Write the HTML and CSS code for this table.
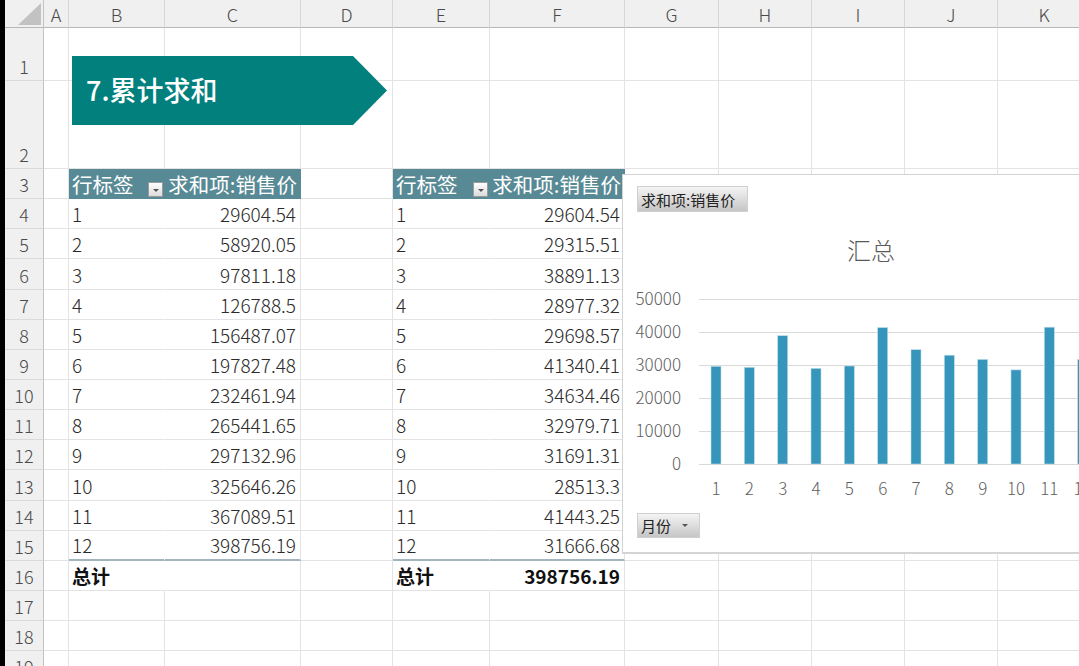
FILE: index.html
```html
<!DOCTYPE html>
<html lang="zh">
<head>
<meta charset="utf-8">
<title>累计求和</title>
<link rel="stylesheet" href="styles.css">
</head>
<body>
<div class="sheet">
  <div class="strip"></div>
  <div class="grid">
    <div class="ch corner"><span class="tri"></span></div><div class="ch">A</div><div class="ch">B</div><div class="ch">C</div><div class="ch">D</div><div class="ch">E</div><div class="ch">F</div><div class="ch">G</div><div class="ch">H</div><div class="ch">I</div><div class="ch">J</div><div class="ch">K</div>

    <div class="rh">1</div><div></div><div></div><div></div><div></div><div></div><div></div><div></div><div></div><div></div><div></div><div></div>
    <div class="rh">2</div><div></div><div></div><div></div><div></div><div></div><div></div><div></div><div></div><div></div><div></div><div></div>

    <div class="rh">3</div><div></div><div class="th thl">行标签<span class="dd"></span></div><div class="th thr">求和项:销售价</div><div></div><div class="th thl">行标签<span class="dd"></span></div><div class="th thr">求和项:销售价</div><div></div><div></div><div></div><div></div><div></div>

    <div class="rh">4</div><div></div><div class="pl">1</div><div class="pr">29604.54</div><div></div><div class="pl">1</div><div class="pr">29604.54</div><div></div><div></div><div></div><div></div><div></div>
    <div class="rh">5</div><div></div><div class="pl">2</div><div class="pr">58920.05</div><div></div><div class="pl">2</div><div class="pr">29315.51</div><div></div><div></div><div></div><div></div><div></div>
    <div class="rh">6</div><div></div><div class="pl">3</div><div class="pr">97811.18</div><div></div><div class="pl">3</div><div class="pr">38891.13</div><div></div><div></div><div></div><div></div><div></div>
    <div class="rh">7</div><div></div><div class="pl">4</div><div class="pr">126788.5</div><div></div><div class="pl">4</div><div class="pr">28977.32</div><div></div><div></div><div></div><div></div><div></div>
    <div class="rh">8</div><div></div><div class="pl">5</div><div class="pr">156487.07</div><div></div><div class="pl">5</div><div class="pr">29698.57</div><div></div><div></div><div></div><div></div><div></div>
    <div class="rh">9</div><div></div><div class="pl">6</div><div class="pr">197827.48</div><div></div><div class="pl">6</div><div class="pr">41340.41</div><div></div><div></div><div></div><div></div><div></div>
    <div class="rh">10</div><div></div><div class="pl">7</div><div class="pr">232461.94</div><div></div><div class="pl">7</div><div class="pr">34634.46</div><div></div><div></div><div></div><div></div><div></div>
    <div class="rh">11</div><div></div><div class="pl">8</div><div class="pr">265441.65</div><div></div><div class="pl">8</div><div class="pr">32979.71</div><div></div><div></div><div></div><div></div><div></div>
    <div class="rh">12</div><div></div><div class="pl">9</div><div class="pr">297132.96</div><div></div><div class="pl">9</div><div class="pr">31691.31</div><div></div><div></div><div></div><div></div><div></div>
    <div class="rh">13</div><div></div><div class="pl">10</div><div class="pr">325646.26</div><div></div><div class="pl">10</div><div class="pr">28513.3</div><div></div><div></div><div></div><div></div><div></div>
    <div class="rh">14</div><div></div><div class="pl">11</div><div class="pr">367089.51</div><div></div><div class="pl">11</div><div class="pr">41443.25</div><div></div><div></div><div></div><div></div><div></div>
    <div class="rh">15</div><div></div><div class="pl last">12</div><div class="pr last">398756.19</div><div></div><div class="pl last">12</div><div class="pr last">31666.68</div><div></div><div></div><div></div><div></div><div></div>

    <div class="rh">16</div><div></div><div class="pl tot">总计</div><div class="pr tot"></div><div></div><div class="pl tot">总计</div><div class="pr tot">398756.19</div><div></div><div></div><div></div><div></div><div></div>

    <div class="rh">17</div><div></div><div></div><div></div><div></div><div></div><div></div><div></div><div></div><div></div><div></div><div></div>
    <div class="rh">18</div><div></div><div></div><div></div><div></div><div></div><div></div><div></div><div></div><div></div><div></div><div></div>
    <div class="rh">19</div><div></div><div></div><div></div><div></div><div></div><div></div><div></div><div></div><div></div><div></div><div></div>
  </div>

  <div class="banner">7.累计求和</div>

  <div class="chart">
    <div class="cbtn">求和项:销售价</div>
    <div class="ctitle">汇总</div>
    <svg class="plot" width="496" height="236" viewBox="0 0 496 236">
      <g stroke="#d9d9d9" stroke-width="1">
        <line x1="76" y1="33.5" x2="496" y2="33.5"/>
        <line x1="76" y1="66.5" x2="496" y2="66.5"/>
        <line x1="76" y1="99.5" x2="496" y2="99.5"/>
        <line x1="76" y1="132.5" x2="496" y2="132.5"/>
        <line x1="76" y1="165.5" x2="496" y2="165.5"/>
        <line x1="76" y1="198.5" x2="496" y2="198.5"/>
      </g>
      <g class="ylab" text-anchor="end">
        <text x="58" y="39">50000</text>
        <text x="58" y="72">40000</text>
        <text x="58" y="105">30000</text>
        <text x="58" y="138">20000</text>
        <text x="58" y="171">10000</text>
        <text x="58" y="204">0</text>
      </g>
      <g fill="#3595bb" stroke="#bcdce8" stroke-width="0.6">
        <rect x="88" y="100.3" width="10" height="97.7"/>
        <rect x="121.3" y="101.3" width="10" height="96.7"/>
        <rect x="154.7" y="69.7" width="10" height="128.3"/>
        <rect x="188" y="102.4" width="10" height="95.6"/>
        <rect x="221.3" y="100" width="10" height="98"/>
        <rect x="254.7" y="61.6" width="10" height="136.4"/>
        <rect x="288" y="83.7" width="10" height="114.3"/>
        <rect x="321.3" y="89.2" width="10" height="108.8"/>
        <rect x="354.7" y="93.4" width="10" height="104.6"/>
        <rect x="388" y="103.9" width="10" height="94.1"/>
        <rect x="421.3" y="61.2" width="10" height="136.8"/>
        <rect x="454.7" y="93.5" width="10" height="104.5"/>
      </g>
      <g class="xlab" text-anchor="middle">
        <text x="93" y="229">1</text>
        <text x="126.3" y="229">2</text>
        <text x="159.7" y="229">3</text>
        <text x="193" y="229">4</text>
        <text x="226.3" y="229">5</text>
        <text x="259.7" y="229">6</text>
        <text x="293" y="229">7</text>
        <text x="326.3" y="229">8</text>
        <text x="359.7" y="229">9</text>
        <text x="393" y="229">10</text>
        <text x="426.3" y="229">11</text>
        <text x="459.7" y="229">12</text>
      </g>
    </svg>
    <div class="cbtn fbtn">月份<span class="arr"></span></div>
  </div>
</div>
</body>
</html>
```

FILE: styles.css
```css
* { box-sizing: border-box; margin: 0; padding: 0; }
html, body { width: 1079px; height: 666px; overflow: hidden; background: #fff; }
body { font-family: "Noto Sans CJK SC", "Noto Sans", sans-serif; color: #2b2b2b; }

.sheet { position: relative; display: flex; height: 666px; }
.strip { width: 5px; flex: none; background: #000; }

.grid {
  flex: none;
  display: grid;
  grid-template-columns: 39px 25px 96px 136px 92px 97px 135px 94px 93px 93px 93px 93px;
  grid-template-rows: 28px 53px 88px;
  grid-auto-rows: 30.15px;
}
.grid > div {
  border-right: 1px solid #e3e3e3;
  border-bottom: 1px solid #e3e3e3;
  display: flex;
  align-items: flex-end;
  padding: 0 3px 2px;
  font-size: 19px;
  font-weight: 300;
  line-height: 24px;
  white-space: nowrap;
  overflow: hidden;
  background: #fff;
}

/* column headers */
.grid > .ch {
  background: #f0f0f0;
  border-right-color: #d7d7d7;
  border-bottom-color: #b7b7b7;
  justify-content: center;
  align-items: center;
  padding: 0;
  font-size: 18px;
  color: #4a4a4a;
}
.grid > .corner { position: relative; border-right-color: #c3c3c3; }
.tri {
  position: absolute;
  right: 2px;
  bottom: 2px;
  width: 23px;
  height: 22px;
  background: #c2c2c2;
  clip-path: polygon(100% 0, 100% 100%, 0 100%);
}

/* row headers */
.grid > .rh {
  background: #f0f0f0;
  border-right-color: #c3c3c3;
  border-bottom-color: #dadada;
  justify-content: center;
  padding: 0 0 2px;
  font-size: 18px;
  color: #4a4a4a;
}

/* pivot header */
.grid > .th {
  background: #588a95;
  color: #fff;
  border-bottom-color: #588a95;
  border-right-color: #588a95;
  font-size: 20.5px;
  font-weight: 400;
}
.grid > .thl { padding-right: 1px; }
.grid > .thr { justify-content: flex-end; padding-right: 3px; }
.dd {
  margin-left: auto;
  margin-bottom: -1px;
  width: 15px;
  height: 15px;
  border: 1px solid #9a9a9a;
  background: linear-gradient(#ffffff, #dcdcdc);
  display: flex;
  align-items: center;
  justify-content: center;
}
.dd::after {
  content: "";
  border-left: 3px solid transparent;
  border-right: 3px solid transparent;
  border-top: 3px solid #555;
  margin-top: 2px;
}

/* pivot body */
.grid > .pl { border-right-color: #fff; }
.grid > .pr { justify-content: flex-end; padding-right: 4px; }
.grid > .last { border-bottom: 2px solid #a2b5bf; }
.grid > .tot { font-weight: 700; color: #111; }

/* floating shapes */
.banner {
  position: absolute;
  left: 72px;
  top: 56px;
  width: 315px;
  height: 69px;
  background: #02807e;
  clip-path: polygon(0 0, 281px 0, 100% 50%, 281px 100%, 0 100%);
  color: #fff;
  font-size: 27px;
  font-weight: 500;
  display: flex;
  align-items: center;
  padding-left: 14px;
  padding-bottom: 2px;
}

.chart {
  position: absolute;
  left: 622px;
  top: 174px;
  width: 498px;
  height: 380px;
  background: #fff;
  border: 1px solid #d2d2d2;
  border-bottom: 2px solid #d4d4d4;
  display: flex;
  flex-direction: column;
  align-items: flex-start;
}
.cbtn {
  margin: 11px 0 0 14px;
  height: 26px;
  width: 111px;
  padding-left: 3px;
  font-size: 15px;
  line-height: 25px;
  color: #222;
  background: linear-gradient(#f4f4f4, #c6c6c6);
  border: 1px solid #d0d0d0;
  display: flex;
  align-items: center;
}
.ctitle {
  align-self: stretch;
  text-align: center;
  margin-top: 22px;
  font-size: 24px;
  font-weight: 300;
  line-height: 32px;
  color: #595959;
}
.plot { display: block; flex: none; }
.plot text { font-family: "Noto Sans CJK SC", "Noto Sans", sans-serif; font-size: 17px; font-weight: 300; fill: #5f5f5f; }
.fbtn { margin-top: 11px; width: 63px; height: 25px; }
.arr {
  margin-left: auto;
  margin-right: 11px;
  border-left: 3px solid transparent;
  border-right: 3px solid transparent;
  border-top: 3px solid #555;
}
```
